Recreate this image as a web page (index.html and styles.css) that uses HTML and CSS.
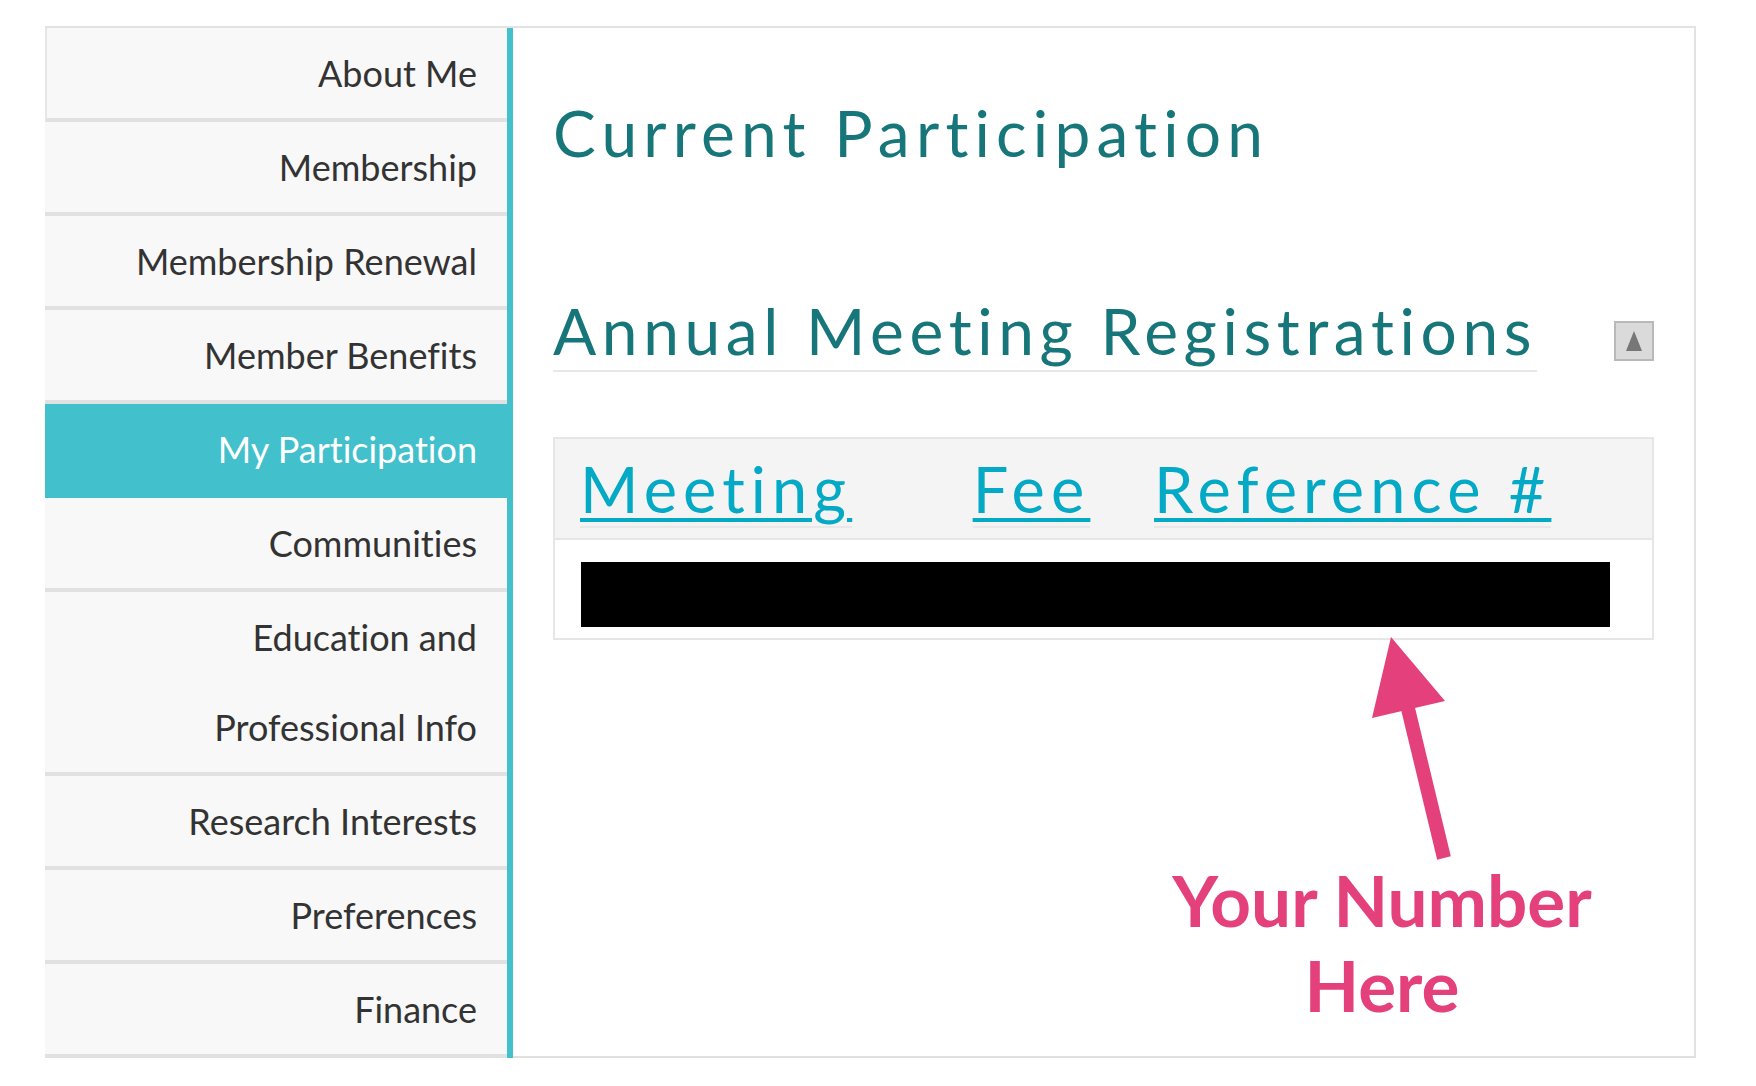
FILE: index.html
```html
<!DOCTYPE html>
<html lang="en">
<head>
<meta charset="utf-8">
<title>My Participation</title>
<link rel="stylesheet" href="styles.css">
</head>
<body>
<div class="page">
  <div class="frame">
    <nav class="sidebar">
      <a class="nav-item first" href="#">About Me</a>
      <a class="nav-item" href="#">Membership</a>
      <a class="nav-item" href="#">Membership Renewal</a>
      <a class="nav-item" href="#">Member Benefits</a>
      <a class="nav-item active" href="#">My Participation</a>
      <a class="nav-item" href="#">Communities</a>
      <a class="nav-item" href="#">Education and<br>Professional Info</a>
      <a class="nav-item" href="#">Research Interests</a>
      <a class="nav-item" href="#">Preferences</a>
      <a class="nav-item" href="#">Finance</a>
    </nav>
    <main class="main">
      <h1 class="title">Current Participation</h1>
      <div class="section-head">
        <h2 class="section-title">Annual Meeting Registrations</h2>
        <button class="collapse" type="button" aria-label="Collapse">
          <svg width="16" height="20" viewBox="0 0 16 20"><polygon points="8,0 16,20 0,20" fill="#777"/></svg>
        </button>
      </div>
      <table class="reg-table">
        <thead>
          <tr>
            <th class="col-meeting"><a href="#">Meeting</a></th>
            <th class="col-fee"><a href="#">Fee</a></th>
            <th class="col-ref"><a href="#">Reference #</a></th>
          </tr>
        </thead>
        <tbody>
          <tr>
            <td colspan="3"><div class="redacted"></div></td>
          </tr>
        </tbody>
      </table>
      <svg class="arrow" width="100" height="240" viewBox="0 0 100 240">
        <polygon points="31,7 12,88 85,71" fill="#e4407b"/>
        <line x1="44" y1="62" x2="84" y2="228" stroke="#e4407b" stroke-width="14"/>
      </svg>
      <div class="callout">Your Number<br>Here</div>
    </main>
  </div>
</div>
</body>
</html>
```

FILE: styles.css
```css
* { box-sizing: border-box; }

html, body {
  margin: 0;
  padding: 0;
  background: #ffffff;
}

body {
  font-family: Lato, "Open Sans", "Liberation Sans", sans-serif;
}

.page {
  padding: 26px 0 0 45px;
}

.frame {
  display: flex;
  width: 1651px;
  border-top: 2px solid #e2e2e2;
  border-right: 2px solid #e2e2e2;
}

.sidebar {
  width: 468px;
  flex: none;
  display: flex;
  flex-direction: column;
  border-right: 6px solid #42c0cb;
}

.nav-item {
  display: block;
  background: #f8f8f8;
  color: #333333;
  text-decoration: none;
  font-size: 36px;
  line-height: 90px;
  text-align: right;
  padding-right: 30px;
  border-bottom: 4px solid #e1e1e1;
  font-variant-ligatures: no-common-ligatures;
}

.nav-item.first {
  border-left: 2px solid #e6e6e6;
}

.nav-item.active {
  background: #42c0cb;
  color: #ffffff;
  border-bottom-color: #42c0cb;
}

.main {
  position: relative;
  flex: 1;
  padding: 0 40px;
  border-bottom: 2px solid #e0e0e0;
}

.title {
  margin: 67px 0 0;
  font-size: 64px;
  line-height: 1.2;
  font-weight: 400;
  letter-spacing: 0.097em;
  color: #17767a;
}

.section-head {
  display: flex;
  justify-content: space-between;
  align-items: flex-end;
  margin-top: 121px;
}

.section-title {
  display: inline-block;
  margin: 0;
  font-size: 64px;
  line-height: 1.2;
  font-weight: 400;
  letter-spacing: 0.088em;
  color: #17767a;
  border-bottom: 2px solid #e8e8e8;
}

.collapse {
  width: 40px;
  height: 40px;
  margin: 0 0 11px;
  padding: 0;
  background: #dadada;
  border: 2px solid #b9b9b9;
  display: flex;
  align-items: center;
  justify-content: center;
}

.collapse svg { display: block; }

.reg-table {
  margin-top: 65px;
  width: 100%;
  border-collapse: separate;
  border-spacing: 0;
  border: 2px solid #e6e6e6;
}

.reg-table th {
  background: #f4f4f4;
  padding: 13px 24px 10px;
  text-align: left;
  font-weight: 400;
  border-bottom: 2px solid #e6e6e6;
  vertical-align: top;
}

.reg-table th.col-meeting { width: 378px; padding-left: 25px; }
.reg-table th.col-fee { width: 197px; text-align: center; padding-left: 0; padding-right: 0; }

.reg-table th a {
  display: inline-block;
  font-size: 63px;
  line-height: 1.18;
  letter-spacing: 0.097em;
  color: #03a9c5;
  text-decoration: underline;
  text-decoration-thickness: 4px;
  text-underline-offset: 5px;
  border-bottom: 2px solid #e8e8e8;
}

.reg-table td {
  padding: 22px 26px 11px;
  background: #ffffff;
}

.redacted {
  width: 1029px;
  height: 65px;
  background: #000000;
}

.arrow {
  position: absolute;
  left: 847px;
  top: 602px;
}

.callout {
  position: absolute;
  left: 619px;
  top: 829px;
  width: 500px;
  text-align: center;
  font-size: 71px;
  line-height: 85px;
  font-weight: 700;
  color: #e4407b;
}
```
